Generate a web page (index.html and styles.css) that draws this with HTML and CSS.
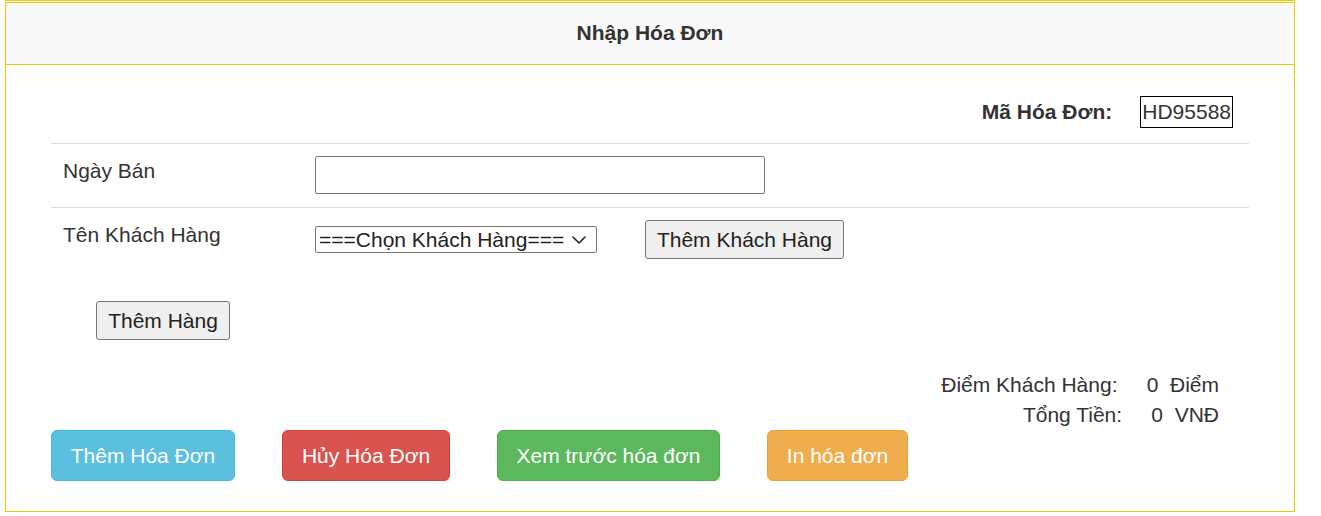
FILE: index.html
```html
<!DOCTYPE html>
<html lang="vi">
<head>
<meta charset="utf-8">
<title>Nhập Hóa Đơn</title>
<link rel="stylesheet" href="styles.css">
</head>
<body>
<div class="topline"></div>
<div class="panel">
  <div class="panel-heading">Nhập Hóa Đơn</div>
  <div class="panel-body">
    <div class="row row-code">
      <span class="code-label">Mã Hóa Đơn:</span>
      <span class="code-box">HD95588</span>
    </div>
    <div class="row row-field">
      <label class="field-label">Ngày Bán</label>
      <input class="date-input" type="text">
    </div>
    <div class="row row-customer">
      <label class="field-label">Tên Khách Hàng</label>
      <span class="select-wrap">
        <select class="customer-select">
          <option>===Chọn Khách Hàng===</option>
        </select>
        <svg class="select-arrow" width="14" height="8" viewBox="0 0 14 8" aria-hidden="true">
          <path d="M1 1 L7 7 L13 1" fill="none" stroke="#222" stroke-width="1.6" stroke-linecap="round" stroke-linejoin="round"/>
        </svg>
      </span>
      <button class="plain-btn add-customer" type="button">Thêm Khách Hàng</button>
    </div>
    <div class="add-item">
      <button class="plain-btn" type="button">Thêm Hàng</button>
    </div>
    <div class="totals">
      <div class="total-line">Điểm Khách Hàng:&nbsp;&nbsp;&nbsp;&nbsp;&nbsp;0&nbsp;&nbsp;Điểm</div>
      <div class="total-line">Tổng Tiền:&nbsp;&nbsp;&nbsp;&nbsp;&nbsp;0&nbsp;&nbsp;VNĐ</div>
    </div>
    <div class="actions">
      <button class="btn btn-info btn-add" type="button">Thêm Hóa Đơn</button>
      <button class="btn btn-danger btn-cancel" type="button">Hủy Hóa Đơn</button>
      <button class="btn btn-success btn-preview" type="button">Xem trước hóa đơn</button>
      <button class="btn btn-warning btn-print" type="button">In hóa đơn</button>
    </div>
  </div>
</div>
</body>
</html>
```

FILE: styles.css
```css
* { box-sizing: border-box; }

html, body {
  margin: 0;
  padding: 0;
  background: #fff;
}

body {
  font-family: "Liberation Sans", Arial, sans-serif;
  font-size: 21px;
  line-height: 30px;
  color: #333;
}

.topline {
  margin-left: 5px;
  width: 1290px;
  height: 1px;
  background: #f0c800;
  margin-bottom: 1px;
}

.panel {
  margin-left: 5px;
  width: 1290px;
  height: 510px;
  border: 1px solid #f0c800;
  display: flex;
  flex-direction: column;
}

.panel-heading {
  height: 62px;
  background: #f8f8f8;
  border-bottom: 1px solid #f0c800;
  text-align: center;
  font-weight: bold;
  line-height: 59px;
  color: #333;
}

.panel-body {
  padding: 0 45px;
  display: flex;
  flex-direction: column;
}

.row {
  display: flex;
  align-items: flex-start;
}

.row-code {
  justify-content: flex-end;
  gap: 28px;
  padding: 31px 16px 15px 0;
  border-bottom: 1px solid #ddd;
  height: 79px;
}

.code-label {
  font-weight: bold;
  line-height: 32px;
}

.code-box {
  display: inline-block;
  border: 1px solid #000;
  height: 32px;
  line-height: 30px;
  padding: 0 1px;
}

.row-field {
  padding: 12px;
  border-bottom: 1px solid #ddd;
  height: 64px;
}

.field-label {
  width: 252px;
  flex: none;
  line-height: 30px;
}

.date-input {
  width: 450px;
  height: 38px;
  border: 1px solid #767676;
  border-radius: 2px;
  font-family: inherit;
  font-size: 21px;
  padding: 1px 4px;
}

.row-customer {
  padding: 12px;
}

.select-wrap {
  position: relative;
  display: block;
  margin-top: 6px;
  width: 282px;
  height: 27px;
}

.customer-select {
  appearance: none;
  -webkit-appearance: none;
  display: block;
  width: 282px;
  height: 27px;
  border: 1px solid #767676;
  border-radius: 2px;
  font-family: inherit;
  font-size: 21px;
  line-height: 25px;
  padding: 0 30px 0 3px;
  color: #222;
  background: #fff;
}

.select-arrow {
  position: absolute;
  right: 11px;
  top: 10px;
  pointer-events: none;
}

.plain-btn {
  font-family: inherit;
  font-size: 21px;
  color: #222;
  background: #efefef;
  border: 1px solid #767676;
  border-radius: 3px;
  height: 39px;
  padding: 0;
  line-height: 37px;
  white-space: nowrap;
  text-align: center;
}

.add-customer {
  margin-left: 48px;
  width: 199px;
}

.add-item {
  margin-top: 30px;
  padding-left: 45px;
}

.add-item .plain-btn {
  width: 134px;
}

.totals {
  margin-top: 30px;
  padding-right: 30px;
  text-align: right;
}

.total-line {
  line-height: 30px;
  height: 30px;
}

.actions {
  display: flex;
  gap: 47px;
}

.btn {
  font-family: inherit;
  font-size: 21px;
  color: #fff;
  height: 51px;
  padding: 0;
  border: 1px solid transparent;
  border-radius: 6px;
  line-height: 49px;
  white-space: nowrap;
  text-align: center;
}

.btn-add { width: 184px; }
.btn-cancel { width: 168px; }
.btn-preview { width: 223px; }
.btn-print { width: 141px; }

.btn-info { background: #5bc0de; border-color: #46b8da; }
.btn-danger { background: #d9534f; border-color: #d43f3a; }
.btn-success { background: #5cb85c; border-color: #4cae4c; }
.btn-warning { background: #f0ad4e; border-color: #eea236; }
```
